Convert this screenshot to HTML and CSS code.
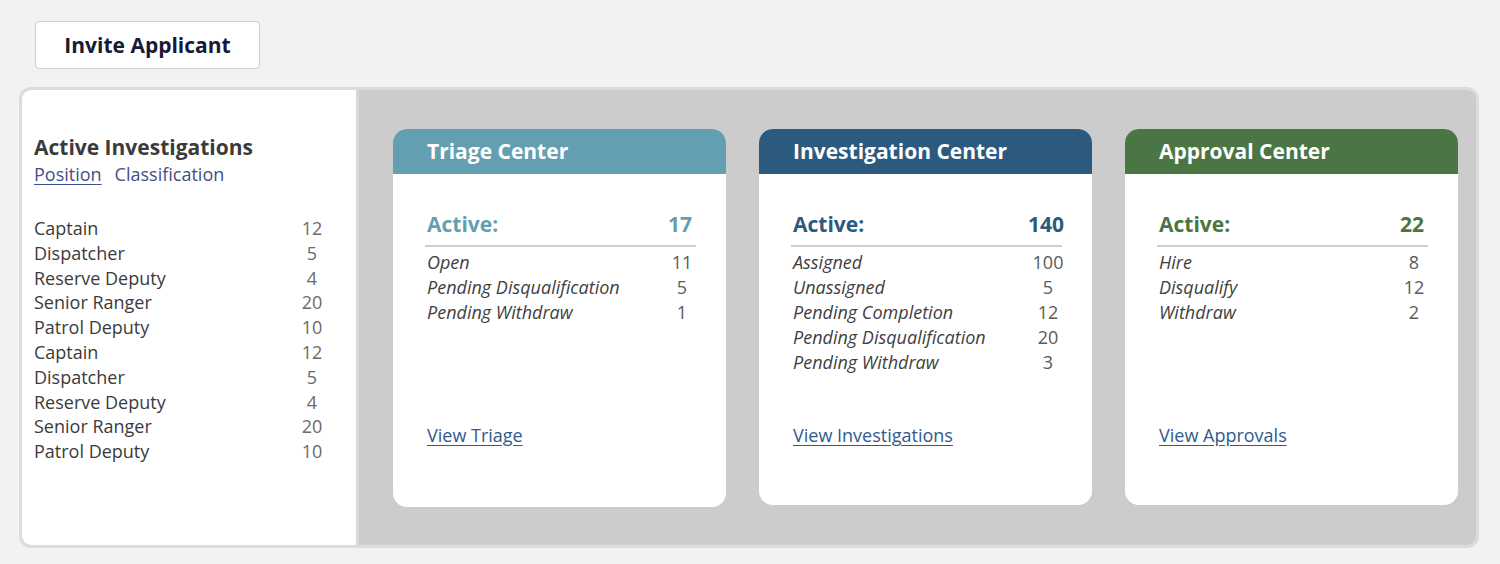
FILE: index.html
```html
<!DOCTYPE html>
<html lang="en">
<head>
<meta charset="utf-8">
<title>Dashboard</title>
<link rel="stylesheet" href="styles.css">
</head>
<body>
<div class="page">
  <button class="btn-invite" type="button">Invite Applicant</button>
  <div class="panel">
    <aside class="sidebar">
      <h2 class="side-title">Active Investigations</h2>
      <div class="side-tabs">
        <a class="tab tab--active" href="#">Position</a>
        <span class="tab">Classification</span>
      </div>
      <ul class="side-list">
        <li class="side-row"><span>Captain</span><span class="side-num">12</span></li>
        <li class="side-row"><span>Dispatcher</span><span class="side-num">5</span></li>
        <li class="side-row"><span>Reserve Deputy</span><span class="side-num">4</span></li>
        <li class="side-row"><span>Senior Ranger</span><span class="side-num">20</span></li>
        <li class="side-row"><span>Patrol Deputy</span><span class="side-num">10</span></li>
        <li class="side-row"><span>Captain</span><span class="side-num">12</span></li>
        <li class="side-row"><span>Dispatcher</span><span class="side-num">5</span></li>
        <li class="side-row"><span>Reserve Deputy</span><span class="side-num">4</span></li>
        <li class="side-row"><span>Senior Ranger</span><span class="side-num">20</span></li>
        <li class="side-row"><span>Patrol Deputy</span><span class="side-num">10</span></li>
      </ul>
    </aside>
    <section class="centers">
      <div class="card card--triage">
        <div class="card-head">Triage Center</div>
        <div class="card-body">
          <div class="stats">
            <div class="active-row"><span>Active:</span><span class="active-num">17</span></div>
            <div class="stat-row"><span>Open</span><span class="stat-num">11</span></div>
            <div class="stat-row"><span>Pending Disqualification</span><span class="stat-num">5</span></div>
            <div class="stat-row"><span>Pending Withdraw</span><span class="stat-num">1</span></div>
          </div>
          <a class="card-link" href="#">View Triage</a>
        </div>
      </div>
      <div class="card card--invest">
        <div class="card-head">Investigation Center</div>
        <div class="card-body">
          <div class="stats">
            <div class="active-row"><span>Active:</span><span class="active-num">140</span></div>
            <div class="stat-row"><span>Assigned</span><span class="stat-num">100</span></div>
            <div class="stat-row"><span>Unassigned</span><span class="stat-num">5</span></div>
            <div class="stat-row"><span>Pending Completion</span><span class="stat-num">12</span></div>
            <div class="stat-row"><span>Pending Disqualification</span><span class="stat-num">20</span></div>
            <div class="stat-row"><span>Pending Withdraw</span><span class="stat-num">3</span></div>
          </div>
          <a class="card-link" href="#">View Investigations</a>
        </div>
      </div>
      <div class="card card--approve">
        <div class="card-head">Approval Center</div>
        <div class="card-body">
          <div class="stats">
            <div class="active-row"><span>Active:</span><span class="active-num">22</span></div>
            <div class="stat-row"><span>Hire</span><span class="stat-num">8</span></div>
            <div class="stat-row"><span>Disqualify</span><span class="stat-num">12</span></div>
            <div class="stat-row"><span>Withdraw</span><span class="stat-num">2</span></div>
          </div>
          <a class="card-link" href="#">View Approvals</a>
        </div>
      </div>
    </section>
  </div>
</div>
</body>
</html>
```

FILE: styles.css
```css
* { box-sizing: border-box; }

html, body {
  margin: 0;
  padding: 0;
  background: #f2f2f2;
  font-family: "Open Sans", "Noto Sans", sans-serif;
  color: #3b3b3b;
}

.page {
  padding: 21px 21px 0 19px;
}

.btn-invite {
  display: block;
  margin-left: 16px;
  width: 225px;
  height: 48px;
  background: #ffffff;
  border: 1px solid #cfcfcf;
  border-radius: 4px;
  font-family: "Open Sans", "Noto Sans", sans-serif;
  font-size: 21px;
  font-weight: 700;
  color: #161a35;
  padding: 0;
  cursor: pointer;
}

.panel {
  margin-top: 18px;
  width: 1460px;
  height: 461px;
  display: flex;
  background: #cccccc;
  border: 3px solid #dcdcdc;
  border-radius: 12px;
  overflow: hidden;
}

.sidebar {
  width: 337px;
  flex: none;
  background: #ffffff;
  border-right: 3px solid #d9d9d9;
  padding: 43px 12px 0 12px;
}

.side-title {
  margin: 0;
  font-size: 21px;
  font-weight: 700;
  line-height: 28px;
  color: #3b3b3b;
}

.side-tabs {
  display: flex;
  gap: 13px;
  font-size: 18px;
  line-height: 26px;
}

.tab {
  color: #3f4f88;
  text-decoration: none;
}

.tab--active {
  text-decoration: underline;
  text-underline-offset: 3px;
}

.side-list {
  list-style: none;
  margin: 29px 0 0 0;
  padding: 0 18px 0 0;
}

.side-row {
  display: flex;
  justify-content: space-between;
  font-size: 18px;
  line-height: 24.8px;
  color: #3b3b3b;
}

.side-num {
  width: 28px;
  display: flex;
  justify-content: center;
  color: #6a6a6a;
}

.centers {
  flex: 1;
  display: flex;
  align-items: flex-start;
  gap: 33px;
  padding: 39px 18px 0 34px;
}

.card {
  width: 333px;
  height: 376px;
  flex: none;
  background: #ffffff;
  border-radius: 14px;
  overflow: hidden;
  display: flex;
  flex-direction: column;
}

.card--triage { height: 378px; }

.card-head {
  height: 45px;
  line-height: 44px;
  padding-left: 34px;
  font-size: 21px;
  font-weight: 700;
  color: #ffffff;
}

.card--triage .card-head { background: #649fb1; }
.card--invest .card-head { background: #2c5a7e; }
.card--approve .card-head { background: #4a7643; }

.card--triage .active-row { color: #649fb1; }
.card--invest .active-row { color: #2c5a7e; }
.card--approve .active-row { color: #4a7643; }

.card-body {
  padding: 36px 30px 0 32px;
  display: flex;
  flex-direction: column;
}

.stats {
  height: 201px;
}

.active-row {
  display: flex;
  justify-content: space-between;
  font-size: 21px;
  font-weight: 700;
  line-height: 28px;
  padding: 0 0 7px 2px;
  border-bottom: 2px solid #cfcfcf;
  margin-bottom: 3px;
}

.active-num {
  width: 32px;
  display: flex;
  justify-content: center;
}

.stat-row {
  display: flex;
  justify-content: space-between;
  font-size: 18px;
  line-height: 25px;
}

.stat-row > span:first-child {
  font-style: italic;
  color: #3f3f3f;
  padding-left: 2px;
}

.stat-num {
  width: 28px;
  display: flex;
  justify-content: center;
  color: #5a5a5a;
}

.card-link {
  margin-top: 12px;
  padding-left: 2px;
  font-size: 18px;
  line-height: 25px;
  color: #2f5b8e;
  text-decoration: underline;
  text-underline-offset: 3px;
  align-self: flex-start;
}
```
